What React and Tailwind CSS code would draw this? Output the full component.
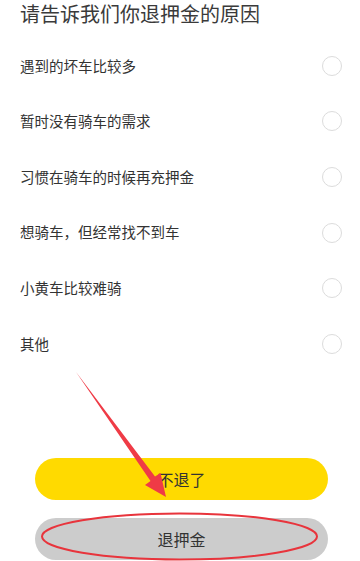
import React, { useState } from "react";

const reasons = [
  "遇到的坏车比较多",
  "暂时没有骑车的需求",
  "习惯在骑车的时候再充押金",
  "想骑车，但经常找不到车",
  "小黄车比较难骑",
  "其他",
];

const App = () => {
  const [picked, setPicked] = useState(null);

  return (
    <div
      className="relative w-[360px] h-[561px] overflow-hidden bg-white flex flex-col text-[#333]"
      style={{ fontFamily: '"Noto Sans CJK SC", "Noto Sans", sans-serif' }}
    >
      {/* Title */}
      <div className="pl-[20px] pt-[2px] text-[20px] leading-[24px] text-[#3a3a3a]">
        请告诉我们你退押金的原因
      </div>

      {/* Reason list */}
      <div className="mt-[12px] flex flex-col">
        {reasons.map((r, i) => (
          <div
            key={r}
            onClick={() => setPicked(i)}
            className="h-[55.6px] flex items-center justify-between pl-[20px] pr-[18px]"
          >
            <span className="text-[14.5px] leading-none text-[#333]">{r}</span>
            <span
              className={
                "w-[20px] h-[20px] rounded-full border " +
                (picked === i ? "border-[#ffda00] bg-[#ffda00]" : "border-[#dcdcdc]")
              }
            />
          </div>
        ))}
      </div>

      {/* Buttons */}
      <div className="mt-[86px] flex flex-col gap-[18px] pl-[35px] pr-[32px]">
        <button className="h-[42px] rounded-full bg-[#ffda00] text-[16px] text-[#333]">
          不退了
        </button>
        <button className="h-[42px] rounded-full bg-[#cccccc] text-[16px] text-[#333]">
          退押金
        </button>
      </div>

      {/* annotation overlay */}
      <svg
        className="absolute inset-0 pointer-events-none"
        width="360"
        height="561"
        viewBox="0 0 360 561"
      >
        <polygon
          points="76,372 155,476.5 160.5,473 166,497 145,485 150.5,481"
          fill="#ef3b46"
        />
        <ellipse
          cx="179.5"
          cy="536.5"
          rx="137.5"
          ry="23"
          fill="none"
          stroke="#e8343c"
          strokeWidth="2"
        />
      </svg>
    </div>
  );
};

export default App;
